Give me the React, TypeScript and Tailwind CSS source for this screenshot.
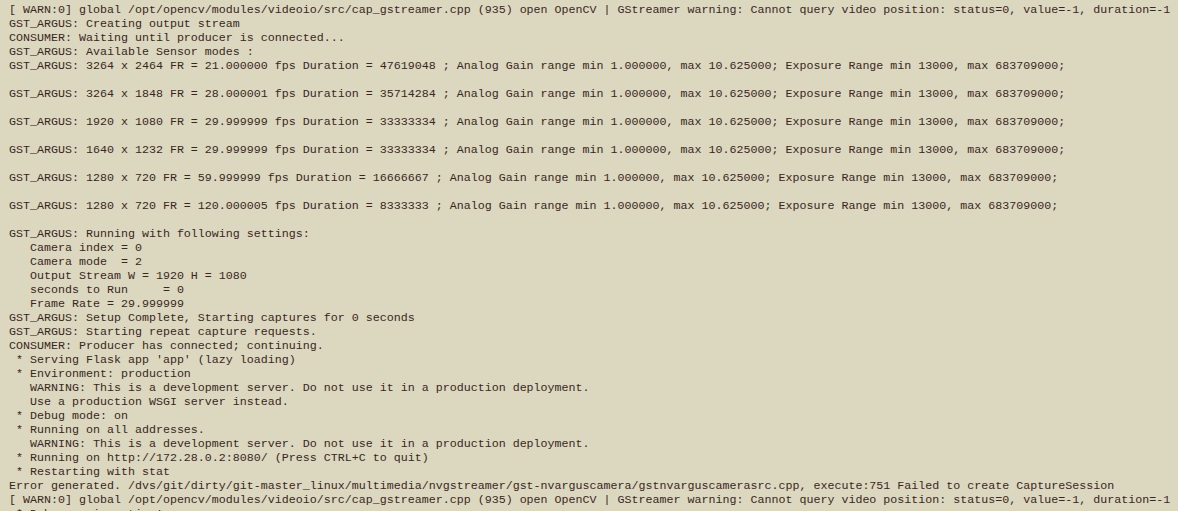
import React from 'react';

const warn =
  '[ WARN:0] global /opt/opencv/modules/videoio/src/cap_gstreamer.cpp (935) open OpenCV | GStreamer warning: Cannot query video position: status=0, value=-1, duration=-1';

const gainTail =
  'Analog Gain range min 1.000000, max 10.625000; Exposure Range min 13000, max 683709000;';

const modes = [
  '3264 x 2464 FR = 21.000000 fps Duration = 47619048 ;',
  '3264 x 1848 FR = 28.000001 fps Duration = 35714284 ;',
  '1920 x 1080 FR = 29.999999 fps Duration = 33333334 ;',
  '1640 x 1232 FR = 29.999999 fps Duration = 33333334 ;',
  '1280 x 720 FR = 59.999999 fps Duration = 16666667 ;',
  '1280 x 720 FR = 120.000005 fps Duration = 8333333 ;',
];

const lines: string[] = [
  warn,
  'GST_ARGUS: Creating output stream',
  'CONSUMER: Waiting until producer is connected...',
  'GST_ARGUS: Available Sensor modes :',
  ...modes.flatMap((m) => [`GST_ARGUS: ${m} ${gainTail}`, '']),
  'GST_ARGUS: Running with following settings:',
  '   Camera index = 0',
  '   Camera mode  = 2',
  '   Output Stream W = 1920 H = 1080',
  '   seconds to Run     = 0',
  '   Frame Rate = 29.999999',
  'GST_ARGUS: Setup Complete, Starting captures for 0 seconds',
  'GST_ARGUS: Starting repeat capture requests.',
  'CONSUMER: Producer has connected; continuing.',
  " * Serving Flask app 'app' (lazy loading)",
  ' * Environment: production',
  '   WARNING: This is a development server. Do not use it in a production deployment.',
  '   Use a production WSGI server instead.',
  ' * Debug mode: on',
  ' * Running on all addresses.',
  '   WARNING: This is a development server. Do not use it in a production deployment.',
  ' * Running on http://172.28.0.2:8080/ (Press CTRL+C to quit)',
  ' * Restarting with stat',
  'Error generated. /dvs/git/dirty/git-master_linux/multimedia/nvgstreamer/gst-nvarguscamera/gstnvarguscamerasrc.cpp, execute:751 Failed to create CaptureSession',
  warn,
  ' * Debugger is active!',
];

export default function App() {
  return (
    <div className="h-[511px] w-full overflow-hidden bg-[#dcd8c0]">
      <pre className="m-0 whitespace-pre pl-[9px] pt-[3px] font-['Liberation_Mono',monospace] text-[11.66px] leading-[14px] text-[#3a2620]">
        {lines.join('\n')}
      </pre>
    </div>
  );
}
